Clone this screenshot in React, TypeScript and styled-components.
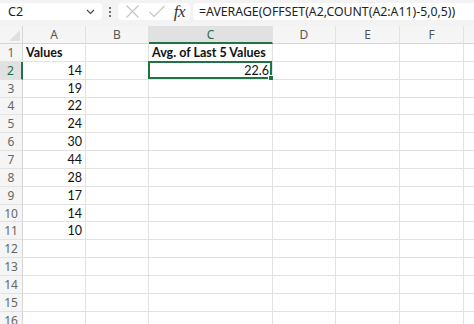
import React from 'react';
import styled, { createGlobalStyle } from 'styled-components';

const GlobalStyle = createGlobalStyle`
  html, body {
    margin: 0;
    padding: 0;
    background: #ffffff;
    overflow: hidden;
  }
`;

const UI_FONT = `"Noto Sans", "Open Sans", sans-serif`;
const CELL_FONT = `Lato, "Open Sans", sans-serif`;
const GREEN = '#217346';

// G is only partly in view, so its letter is left out like in the sheet
const COLUMNS = ['A', 'B', 'C', 'D', 'E', 'F', 'G'];
const COL_TEMPLATE = '23px 63px 63px 124px 63px 64px 64px 64px';
const VALUES = [14, 19, 22, 24, 30, 44, 28, 17, 14, 10];
const ROW_COUNT = 16;

const Window = styled.div`
  width: 474px;
  height: 324px;
  display: flex;
  flex-direction: column;
  background: #f3f3f3;
  overflow: hidden;
`;

const FormulaBar = styled.div`
  height: 21px;
  display: flex;
  align-items: stretch;
  padding: 3px 0 6px 0;
  font-family: ${UI_FONT};
`;

const NameBox = styled.div`
  width: 102px;
  background: #fff;
  border-radius: 0 4px 4px 0;
  display: flex;
  align-items: center;
  justify-content: space-between;
  padding: 0 6px 0 8px;
  box-sizing: border-box;
  font-size: 12.5px;
  color: #222;
`;

const Dots = styled.div`
  width: 16px;
  display: flex;
  flex-direction: column;
  align-items: center;
  justify-content: center;
  gap: 2px;
  span {
    width: 2px;
    height: 2px;
    border-radius: 1px;
    background: #444;
  }
`;

const FxBox = styled.div`
  width: 72px;
  background: #fff;
  border-radius: 4px;
  display: flex;
  align-items: center;
  justify-content: space-between;
  padding: 0 5px 0 7px;
  box-sizing: border-box;
`;

const FxLabel = styled.span`
  font-family: "Liberation Serif", serif;
  font-style: italic;
  font-size: 17px;
  line-height: 1;
  color: #333;
  letter-spacing: -0.5px;
`;

const FormulaInput = styled.div`
  flex: 1;
  margin-left: 3px;
  background: #fff;
  border-radius: 4px 0 0 4px;
  display: flex;
  align-items: center;
  padding-left: 6px;
  font-size: 12.3px;
  color: #222;
  white-space: nowrap;
`;

const Grid = styled.div`
  flex: 1;
  display: grid;
  grid-template-columns: ${COL_TEMPLATE};
  grid-template-rows: 18px;
  grid-auto-rows: 17.85px;
  background: #fff;
`;

const Corner = styled.div`
  background: #f5f5f5;
  border-bottom: 1px solid #d6d6d6;
  border-right: 1px solid #d6d6d6;
  position: relative;
  box-sizing: border-box;
`;

const CornerTriangle = styled.div`
  position: absolute;
  right: 2px;
  bottom: 2px;
  width: 0;
  height: 0;
  border-left: 11px solid transparent;
  border-bottom: 11px solid #e0e0e0;
`;

const ColHeader = styled.div<{ $active?: boolean }>`
  background: ${(p) => (p.$active ? '#e1e1e1' : '#f5f5f5')};
  border-right: 1px solid #e2e2e2;
  border-bottom: ${(p) => (p.$active ? `2px solid ${GREEN}` : '1px solid #d6d6d6')};
  box-sizing: border-box;
  display: flex;
  align-items: center;
  justify-content: center;
  font-family: ${UI_FONT};
  font-size: 12px;
  color: ${(p) => (p.$active ? '#1e6e45' : '#555')};
`;

const RowHeader = styled.div<{ $active?: boolean }>`
  background: ${(p) => (p.$active ? '#e1e1e1' : '#f5f5f5')};
  border-right: ${(p) => (p.$active ? `2px solid ${GREEN}` : '1px solid #d6d6d6')};
  border-bottom: 1px solid #e2e2e2;
  box-sizing: border-box;
  display: flex;
  align-items: center;
  justify-content: center;
  font-family: ${UI_FONT};
  font-size: 12px;
  color: ${(p) => (p.$active ? '#1e6e45' : '#666')};
`;

const Cell = styled.div<{ $align?: 'left' | 'right'; $bold?: boolean }>`
  position: relative;
  border-right: 1px solid #e2e2e2;
  border-bottom: 1px solid #e2e2e2;
  box-sizing: border-box;
  display: flex;
  align-items: center;
  justify-content: ${(p) => (p.$align === 'right' ? 'flex-end' : 'flex-start')};
  padding: 0 3px;
  font-family: ${CELL_FONT};
  font-size: 12.5px;
  font-weight: ${(p) => (p.$bold ? 700 : 400)};
  color: #111;
  white-space: nowrap;
`;

const Selection = styled.div`
  position: absolute;
  inset: -1px 0 0 -1px;
  border: 2px solid ${GREEN};
  pointer-events: none;
`;

const FillHandle = styled.div`
  position: absolute;
  right: -4px;
  bottom: -4px;
  width: 4px;
  height: 4px;
  background: ${GREEN};
  border: 1px solid #fff;
`;

const cellContent = (row: number, col: string) => {
  if (col === 'A') {
    if (row === 1) return { text: 'Values', bold: true };
    const v = VALUES[row - 2];
    if (v !== undefined) return { text: String(v), align: 'right' as const };
  }
  if (col === 'C') {
    if (row === 1) return { text: 'Avg. of Last 5 Values', bold: true };
    if (row === 2) return { text: '22.6', align: 'right' as const };
  }
  return { text: '' };
};

const Chevron = () => (
  <svg width="11" height="11" viewBox="0 0 11 11">
    <path d="M2 4 L5.5 7.5 L9 4" fill="none" stroke="#444" strokeWidth="1.1" />
  </svg>
);

const CrossIcon = () => (
  <svg width="15" height="15" viewBox="0 0 15 15">
    <path d="M1.5 1.5 L13.5 13.5 M13.5 1.5 L1.5 13.5" stroke="#c4c4c4" strokeWidth="1.1" />
  </svg>
);

const CheckIcon = () => (
  <svg width="18" height="15" viewBox="0 0 18 15">
    <path d="M1.5 8 L6 12.5 L16.5 2" fill="none" stroke="#c4c4c4" strokeWidth="1.1" />
  </svg>
);

export default function App() {
  const rows = Array.from({ length: ROW_COUNT }, (_, i) => i + 1);
  return (
    <>
      <GlobalStyle />
      <Window>
        <FormulaBar>
          <NameBox>
            <span>C2</span>
            <Chevron />
          </NameBox>
          <Dots>
            <span />
            <span />
            <span />
          </Dots>
          <FxBox>
            <CrossIcon />
            <CheckIcon />
            <FxLabel>fx</FxLabel>
          </FxBox>
          <FormulaInput>=AVERAGE(OFFSET(A2,COUNT(A2:A11)-5,0,5))</FormulaInput>
        </FormulaBar>
        <Grid>
          <Corner>
            <CornerTriangle />
          </Corner>
          {COLUMNS.map((c) => (
            <ColHeader key={c} $active={c === 'C'}>
              {c === 'G' ? '' : c}
            </ColHeader>
          ))}
          {rows.map((r) => (
            <React.Fragment key={r}>
              <RowHeader $active={r === 2}>{r}</RowHeader>
              {COLUMNS.map((c) => {
                const content = cellContent(r, c);
                const selected = r === 2 && c === 'C';
                return (
                  <Cell key={c} $align={content.align} $bold={content.bold}>
                    {content.text}
                    {selected && (
                      <Selection>
                        <FillHandle />
                      </Selection>
                    )}
                  </Cell>
                );
              })}
            </React.Fragment>
          ))}
        </Grid>
      </Window>
    </>
  );
}
